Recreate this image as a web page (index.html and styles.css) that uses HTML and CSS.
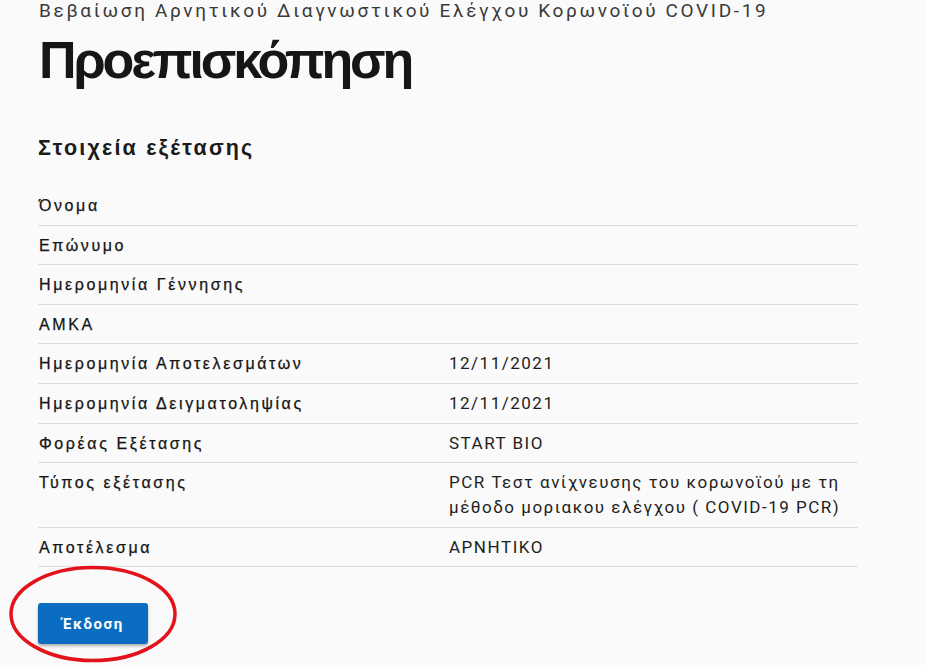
FILE: index.html
```html
<!DOCTYPE html>
<html lang="el">
<head>
  <meta charset="UTF-8">
  <meta name="viewport" content="width=device-width, initial-scale=1.0">
  <title>Προεπισκόπηση</title>
  <link rel="stylesheet" href="styles.css">
</head>
<body>
  <main class="page">
    <p class="caption">Βεβαίωση Αρνητικού Διαγνωστικού Ελέγχου Κορωνοϊού COVID-19</p>
    <h1 class="title">Προεπισκόπηση</h1>

    <h2 class="section-title">Στοιχεία εξέτασης</h2>

    <dl class="details">
      <div class="row"><dt>Όνομα</dt><dd></dd></div>
      <div class="row"><dt>Επώνυμο</dt><dd></dd></div>
      <div class="row"><dt>Ημερομηνία Γέννησης</dt><dd></dd></div>
      <div class="row"><dt>ΑΜΚΑ</dt><dd></dd></div>
      <div class="row"><dt>Ημερομηνία Αποτελεσμάτων</dt><dd>12/11/2021</dd></div>
      <div class="row"><dt>Ημερομηνία Δειγματοληψίας</dt><dd>12/11/2021</dd></div>
      <div class="row"><dt>Φορέας Εξέτασης</dt><dd>START BIO</dd></div>
      <div class="row"><dt>Τύπος εξέτασης</dt><dd>PCR Τεστ ανίχνευσης του κορωνοϊού με τη μέθοδο μοριακου ελέγχου ( COVID-19 PCR)</dd></div>
      <div class="row"><dt>Αποτέλεσμα</dt><dd>ΑΡΝΗΤΙΚΟ</dd></div>
    </dl>

    <div class="actions">
      <button class="btn-primary" type="button">Έκδοση</button>
      <!-- κόκκινος κύκλος σημείωσης -->
      <svg class="mark" width="172" height="100" viewBox="0 0 172 100">
        <ellipse cx="86" cy="50" rx="82" ry="46.5" fill="none" stroke="#e3121b" stroke-width="3.5"/>
      </svg>
    </div>
  </main>
</body>
</html>
```

FILE: styles.css
```css
/* Βάση */
* {
  margin: 0;
  padding: 0;
  box-sizing: border-box;
}
html, body {
  height: 100%;
  background: #fff;
  font-family: "Liberation Sans", Arial, sans-serif;
  color: #1b1b1b;
}

/* Περιοχή περιεχομένου */
.page {
  width: 926px;
  min-height: 100%;
  background: #fafafa;
  padding: 0 68px 0 38px;
  overflow: hidden;
}

.caption {
  font-family: Roboto, sans-serif;
  font-size: 19px;
  color: #3a3a3a;
  letter-spacing: 2.65px;
  line-height: 24px;
  margin-top: -1px;
  margin-left: 1px;
  white-space: nowrap;
}

.title {
  font-size: 52px;
  font-weight: bold;
  line-height: 60px;
  margin-top: 7px;
  margin-left: 1px;
  color: #161616;
  letter-spacing: -3.1px;
}

.section-title {
  font-size: 21.5px;
  font-weight: bold;
  line-height: 28px;
  margin-top: 44px;
  margin-bottom: 24px;
  color: #1b1b1b;
  letter-spacing: 2.2px;
}

/* Πίνακας στοιχείων */
.details {
  width: 820px;
}
.row {
  display: grid;
  grid-template-columns: 411px 1fr;
  padding: 7px 0 6.6px;
  border-bottom: 1px solid #dcdcdc;
  font-size: 16px;
  line-height: 25px;
}
.row dt {
  padding-left: 1px;
  letter-spacing: 2.6px;
  color: #141414;
  -webkit-text-stroke: 0.25px #141414;
}
.row dd {
  font-family: Roboto, sans-serif;
  font-size: 17px;
  letter-spacing: 1.5px;
  color: #1e1e1e;
  padding-right: 0;
}

/* Κουμπί */
.actions {
  position: relative;
  padding-top: 36px;
}
.btn-primary {
  width: 110px;
  height: 41px;
  background: #0b6dc2;
  color: #fff;
  border: none;
  border-radius: 3px;
  box-shadow: 0 2px 3px rgba(0, 0, 0, 0.3);
  font-family: Roboto, sans-serif;
  font-weight: bold;
  font-size: 15px;
  letter-spacing: 1.6px;
}
.mark {
  position: absolute;
  left: -31px;
  top: -3.5px;
  pointer-events: none;
}
```
